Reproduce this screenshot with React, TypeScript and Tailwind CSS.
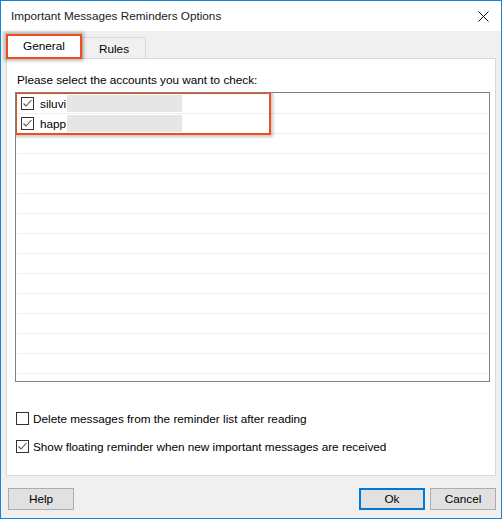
import React from "react";

// Win10-style "Important Messages Reminders Options" dialog
const FONT = { fontFamily: '"Liberation Sans", Arial, sans-serif' };

function Check({ checked }: { checked?: boolean }) {
  return (
    <div className="w-[13px] h-[13px] shrink-0 border border-[#333] bg-white flex items-center justify-center">
      {checked && (
        <svg width="11" height="11" viewBox="0 0 11 11">
          <path d="M1.5 5.5 L4 8 L9.5 2" fill="none" stroke="#555" strokeWidth="1.1" />
        </svg>
      )}
    </div>
  );
}

const ACCOUNTS = ["siluvi", "happ"];

export default function App() {
  const rows = Array.from({ length: 15 }, (_, i) => ACCOUNTS[i]);
  return (
    <div className="w-[504px] h-[522px] bg-white text-[11.75px] text-black" style={FONT}>
      <div className="w-[502px] h-[519px] border border-[#1883d7] flex flex-col">
        {/* title bar */}
        <div className="h-[30px] shrink-0 bg-white flex items-center justify-between pl-[10px] pr-[8px]">
          <span className="text-[#1b1b1b]">Important Messages Reminders Options</span>
          <svg width="11" height="11" viewBox="0 0 11 11" className="mr-[4px]">
            <path d="M0.5 0.5 L10.5 10.5 M10.5 0.5 L0.5 10.5" stroke="#111" strokeWidth="1" />
          </svg>
        </div>

        <div className="flex-1 bg-[#f0f0f0] flex flex-col">
          {/* tabs */}
          <div className="h-[27px] shrink-0 flex items-end pl-[5px]">
            <div className="relative z-10 -mb-[1px] w-[76px] h-[25px] bg-white border-2 border-[#f04d1c] shadow-[0_0_3px_2px_rgba(0,0,0,0.25)] flex items-start justify-center pt-[1px]">
              General
            </div>
            <div className="w-[64px] h-[21px] border border-b-0 border-[#d9d9d9] bg-[#f0f0f0] flex items-center justify-center pt-[2px]">
              Rules
            </div>
          </div>

          {/* panel */}
          <div className="mx-[5px] h-[418px] shrink-0 bg-white border border-[#d9d9d9] flex flex-col px-[8px] pt-[13px]">
            <div className="pl-[2px] leading-[15px]">Please select the accounts you want to check:</div>

            <div className="relative mt-[5px] w-[475px] h-[290px] border border-[#828282] overflow-hidden pt-[1px]">
              {rows.map((name, i) => (
                <div key={i} className="mx-[1px] h-[20px] border-b border-[#f0f0f0] flex items-center">
                  {name && (
                    <>
                      <div className="ml-[4px]">
                        <Check checked />
                      </div>
                      <span className="ml-[6px] w-[27px] overflow-hidden whitespace-nowrap">{name}</span>
                      <div className="w-[115px] self-stretch my-[1px] bg-[#e6e6e6]" />
                    </>
                  )}
                </div>
              ))}
              {/* annotation highlight */}
              <div className="absolute left-[-1px] top-[-1px] w-[256px] h-[43px] border-2 border-[#f04d1c] shadow-[0_0_3px_2px_rgba(0,0,0,0.22)]" />
            </div>

            <div className="mt-[28px] flex items-center gap-[4px] pl-[1px]">
              <Check />
              <span>Delete messages from the reminder list after reading</span>
            </div>
            <div className="mt-[10px] flex items-center gap-[4px] pl-[1px]">
              <Check checked />
              <span>Show floating reminder when new important messages are received</span>
            </div>
          </div>

          {/* buttons */}
          <div className="mt-[12px] flex items-center pl-[7px] pr-[5px]">
            <button className="w-[66px] h-[22px] bg-[#e1e1e1] border border-[#adadad]">Help</button>
            <div className="flex-1" />
            <button className="w-[66px] h-[22px] bg-[#e1e1e1] border-2 border-[#0078d7]">Ok</button>
            <button className="ml-[5px] w-[66px] h-[22px] bg-[#e1e1e1] border border-[#adadad]">Cancel</button>
          </div>
        </div>
      </div>
    </div>
  );
}
